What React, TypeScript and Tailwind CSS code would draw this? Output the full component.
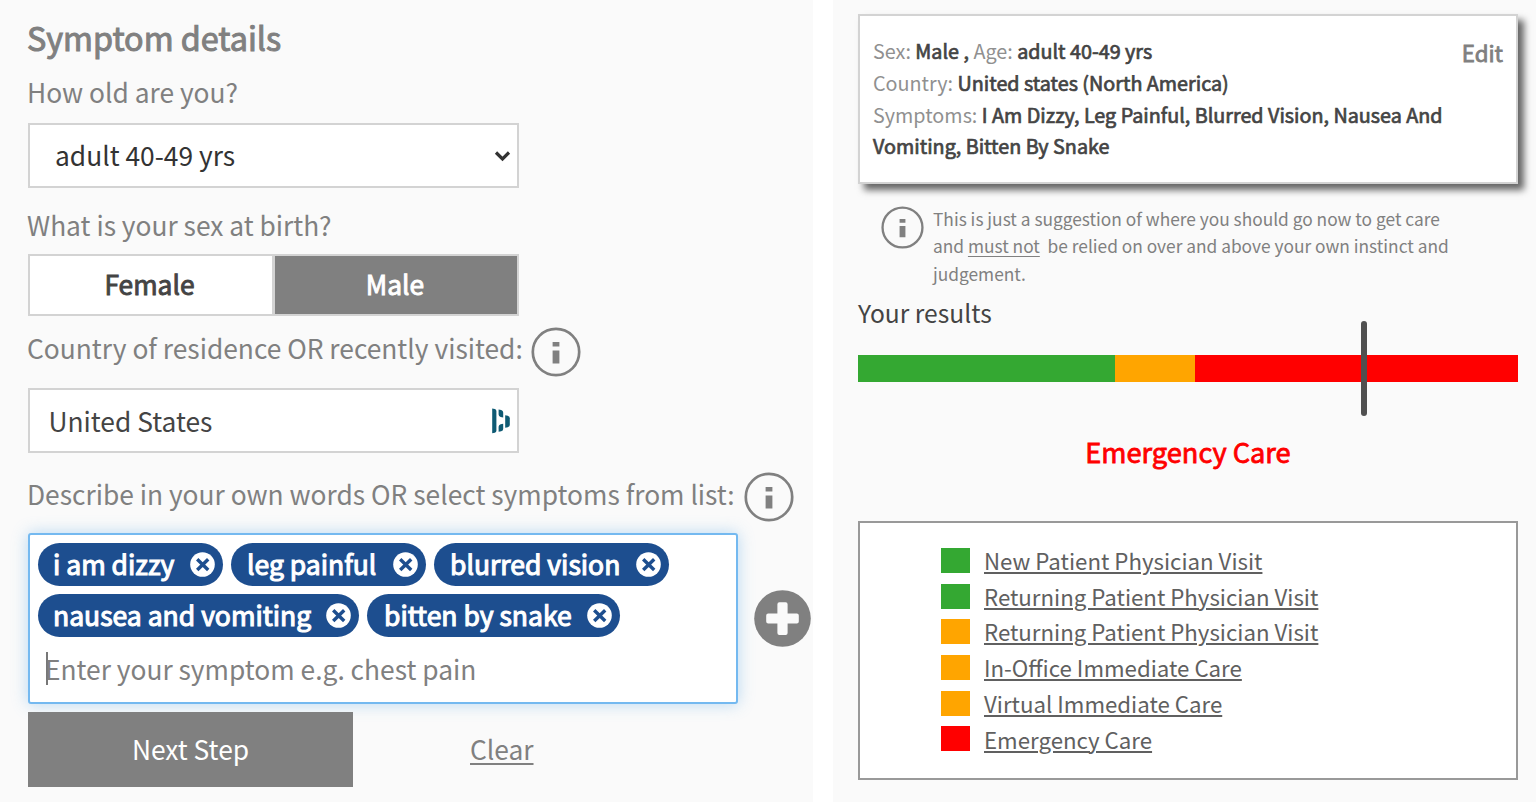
import React from 'react';

// ─── Data ─────────────────────────────────────────────────────────────────────
const TAG_ROWS: { label: string; box: string }[][] = [
  [
    { label: 'i am dizzy', box: 'w-[185px] pl-[15px]' },
    { label: 'leg painful', box: 'w-[195px] pl-4' },
    { label: 'blurred vision', box: 'w-[235px] pl-4' },
  ],
  [
    { label: 'nausea and vomiting', box: 'w-[321px] pl-[15px]' },
    { label: 'bitten by snake', box: 'w-[253px] pl-[17px]' },
  ],
];

const LEGEND = [
  { label: 'New Patient Physician Visit', color: 'bg-[#34a832]' },
  { label: 'Returning Patient Physician Visit', color: 'bg-[#34a832]' },
  { label: 'Returning Patient Physician Visit', color: 'bg-[#ffa500]' },
  { label: 'In-Office Immediate Care', color: 'bg-[#ffa500]' },
  { label: 'Virtual Immediate Care', color: 'bg-[#ffa500]' },
  { label: 'Emergency Care', color: 'bg-[#ff0000]' },
];

// ─── Icons ────────────────────────────────────────────────────────────────────
const InfoIcon: React.FC<{ className: string }> = ({ className }) => (
  <svg viewBox="0 0 50 50" className={`shrink-0 ${className}`}>
    <circle cx="25" cy="25" r="23.2" fill="none" stroke="#808080" strokeWidth="2.7" />
    <path d="M21.6 15h6.8v4.6h-6.8zM21.6 23.4h6.8v13h-6.8z" fill="#808080" />
  </svg>
);

const RemoveIcon: React.FC = () => (
  <svg viewBox="0 0 25 25" className="h-[25px] w-[25px] shrink-0">
    <circle cx="12.5" cy="12.5" r="12.3" fill="#fff" />
    <path d="M7.2 7.2l11 10.8M18.2 7.2L7.2 18" stroke="#1d4e8f" strokeWidth="3.4" />
  </svg>
);

const PlusIcon: React.FC = () => (
  <svg viewBox="0 0 57 57" className="h-[57px] w-[57px] shrink-0">
    <circle cx="28.5" cy="28.5" r="28.3" fill="#808080" />
    <path
      d="M25.4 12.3h6.2q2 0 2 2v9.2h9.2q2 0 2 2v6q0 2-2 2h-9.2v9.6q0 2-2 2h-6.2q-2 0-2-2v-9.6h-9.2q-2 0-2-2v-6q0-2 2-2h9.2v-9.2q0-2 2-2z"
      fill="#fafafa"
    />
  </svg>
);

const BarsIcon: React.FC = () => (
  <svg viewBox="0 0 19 26" className="h-[26px] w-[19px] shrink-0" fill="#0e5a73">
    <path d="M.2.6l2.6.5q1.600.4 1.600 2v19.600q0 1.600-1.600 2l-2.600.5z" />
    <path d="M6.600 1.500l2.600.5q2 .6 2 2.400v5.100l-2.600-.5q-2-.6-2-2.400z" />
    <path d="M6.600 18.700q0-1.800 2-2.400l2.600-.5v5.100q0 1.800-2 2.400l-2.600.5z" />
    <path d="M13.200 7.300l2.600.5q2 .6 2 2.400v6.600q0 1.800-2 2.400l-2.600.5z" />
  </svg>
);

// ─── SymptomForm ──────────────────────────────────────────────────────────────
const SymptomForm: React.FC = () => (
  <section className="flex h-full w-[813px] flex-col bg-[#fafafa] pl-7 text-[26.35px] leading-[35px] text-[#808080]">
    <h1 className="-ml-px h-[74px] text-[32.3px] leading-[74px] [-webkit-text-stroke:1px]">Symptom details</h1>

    <label className="-ml-px">How old are you?</label>
    <div className="mt-[14px] flex h-[65px] w-[491px] items-center justify-between border-2 border-[#d3d3d3] bg-white pr-[6px] pl-[25px] text-[#333]">
      <span className="mb-[2px]">adult 40-49 yrs</span>
      <svg viewBox="0 0 17 12" className="h-3 w-[17px]">
        <path d="M2 2.5l6.5 6.5L15 2.5" fill="none" stroke="#333" strokeWidth="3.2" />
      </svg>
    </div>

    <label className="mt-[19px] -ml-px">What is your sex at birth?</label>
    <div className="mt-3 flex h-[62px] w-[491px] border-2 border-[#d3d3d3] text-center leading-[56px]">
      <button className="w-[242px] bg-white pr-[3px] pb-[2px] text-[#444] [-webkit-text-stroke:0.9px]">Female</button>
      <button className="flex-1 border-l-3 border-[#d3d3d3] bg-[#808080] pr-[2px] pb-[2px] text-white [-webkit-text-stroke:0.9px]">Male</button>
    </div>

    <div className="mt-[11px] flex h-[50px] items-center">
      <label className="mb-[9px] -ml-px w-[504px] whitespace-nowrap">Country of residence OR recently visited:</label>
      <InfoIcon className="h-[50px] w-[50px]" />
    </div>
    <div className="mt-[11px] flex h-[65px] w-[491px] items-center justify-between border-2 border-[#d3d3d3] bg-white pr-[6px] pl-[18.5px] text-[#444]">
      <span>United States</span>
      <BarsIcon />
    </div>

    <div className="mt-[19px] flex h-[50px] items-center">
      <label className="mb-[8px] -ml-px w-[717px] whitespace-nowrap">Describe in your own words OR select symptoms from list:</label>
      <InfoIcon className="h-[50px] w-[50px]" />
    </div>
    <div className="mt-[11px] flex items-center gap-4">
      <div className="h-[171px] w-[710px] rounded-[3px] border-2 border-[#74b9f0] bg-white pt-2 pl-2 shadow-[0_0_16px_rgba(102,175,233,0.45)]">
        {TAG_ROWS.map((row, i) => (
          <div key={i} className="mb-2 flex gap-2">
            {row.map(tag => (
              <span
                key={tag.label}
                className={`flex h-[43px] items-center justify-between rounded-full bg-[#1d4e8f] pr-2 text-[26.5px] whitespace-nowrap text-white [-webkit-text-stroke:1.1px] ${tag.box}`}
              >
                <span className="mb-[2px]">{tag.label}</span>
                <RemoveIcon />
              </span>
            ))}
          </div>
        ))}
        <div className="flex h-[46px] items-center pl-[8px]">
          <span className="-mr-[2px] h-[33px] w-[2px] bg-[#777]" />
          <span className="-ml-px">Enter your symptom e.g. chest pain</span>
        </div>
      </div>
      <PlusIcon />
    </div>

    <div className="mt-2 flex h-[75px] items-center">
      <button className="h-[75px] w-[325px] bg-[#808080] pb-[2px] text-white">Next Step</button>
      <a className="mb-[2px] ml-[117px] underline decoration-2 underline-offset-[3px]">Clear</a>
    </div>
  </section>
);

const Muted: React.FC<{ children: React.ReactNode }> = ({ children }) => (
  <span className="text-[#909090]">{children}</span>
);

const Strong: React.FC<{ children: React.ReactNode }> = ({ children }) => (
  <span className="[-webkit-text-stroke:0.7px]">{children}</span>
);

// ─── Results ──────────────────────────────────────────────────────────────────
const Results: React.FC = () => (
  <section className="flex h-full w-[703px] flex-col bg-[#fafafa] pt-[14px] pr-[18px] pl-[25px] text-[#808080]">
    <div className="flex h-[170px] w-[660px] justify-between border-2 border-[#d3d3d3] bg-white px-[13px] pt-[19px] shadow-[6px_6px_7px_rgba(0,0,0,0.6)]">
      <p className="text-[19.75px] leading-[31.8px] whitespace-nowrap text-[#444]">
        <Muted>Sex:</Muted> <Strong>Male ,</Strong> <Muted>Age:</Muted> <Strong>adult 40-49 yrs</Strong>
        <br />
        <Muted>Country:</Muted> <Strong>United states (North America)</Strong>
        <br />
        <Muted>Symptoms:</Muted> <Strong>I Am Dizzy, Leg Painful, Blurred Vision, Nausea And</Strong>
        <br />
        <Strong>Vomiting, Bitten By Snake</Strong>
      </p>
      <a className="text-[22.3px] leading-[34px] [-webkit-text-stroke:0.8px]">Edit</a>
    </div>

    <div className="mt-[21px] flex h-[83px] pl-[23px]">
      <InfoIcon className="mt-[1px] h-[43px] w-[43px]" />
      <p className="ml-[9px] text-[17.32px] leading-[27.4px] whitespace-nowrap">
        This is just a suggestion of where you should go now to get care
        <br />
        and <u className="decoration-1 underline-offset-[3px]">must not</u>&nbsp; be relied on over and above your own instinct and
        <br />
        judgement.
      </p>
    </div>

    <h2 className="mt-[6px] text-[24.6px] leading-[36px] text-[#444]">Your results</h2>
    <div className="relative mt-[25px] flex h-[27px] w-[660px]">
      <div className="w-[257px] bg-[#34a832]" />
      <div className="w-[80px] bg-[#ffa500]" />
      <div className="flex-1 bg-[#ff0000]" />
      <span className="absolute -top-[34px] left-[502.5px] h-[95px] w-[6px] rounded-full bg-[#505050]" />
    </div>
    <p className="mt-[51px] text-center text-[27.2px] leading-[36px] text-[#ff0000] [-webkit-text-stroke:0.8px]">Emergency Care</p>

    <ul className="mt-[52px] h-[259px] w-[660px] border-2 border-[#999] bg-white pt-[21px] pl-[81px]">
      {LEGEND.map((item, i) => (
        <li key={i} className="flex h-[35.7px] items-center text-[22.25px] leading-[32px] text-[#606060]">
          <span className={`mb-[3px] h-[25px] w-[29px] ${item.color}`} />
          <a className="mb-[3.5px] ml-[14px] underline decoration-2 underline-offset-[2px]">{item.label}</a>
        </li>
      ))}
    </ul>
  </section>
);

export default function App() {
  return (
    <main className="flex h-[802px] w-[1536px] justify-between overflow-hidden bg-white font-['Noto_Sans_CJK_SC',sans-serif]">
      <SymptomForm />
      <Results />
    </main>
  );
}
